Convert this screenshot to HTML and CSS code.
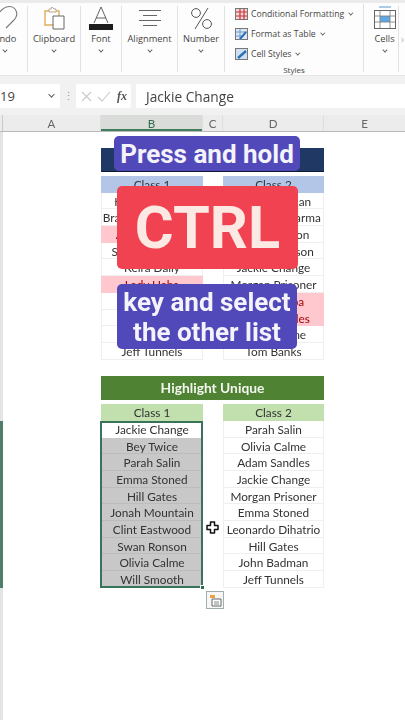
FILE: index.html
```html
<!DOCTYPE html>
<html lang="en">
<head>
<meta charset="utf-8">
<title>Highlight Unique</title>
<link rel="stylesheet" href="styles.css">
</head>
<body>
<div class="app">
  <header class="ribbon">
    <section class="group group-undo">
      <svg class="icon" width="46" height="24" viewBox="0 0 46 24"><path d="M18 6 C22 0 30 -1 33 3 C37 8 34 12 31 15 L24 22" fill="none" stroke="#777" stroke-width="1.1"/></svg>
      <span class="group-name">Undo</span><span class="chev"></span>
    </section>
    <section class="group group-clip">
      <svg class="icon" width="24" height="24" viewBox="0 0 24 24"><path d="M3 5 H17 V19 H3 Z" fill="#fff" stroke="#e3ac5c" stroke-width="1.4"/><path d="M7 5 V3 H9 L10 1 L12 3 H14 V6 H7 Z" fill="#fff" stroke="#b7a78c"/><path d="M11 10 H22 V23 H11 Z" fill="#fff" stroke="#666"/></svg>
      <span class="group-name">Clipboard</span><span class="chev"></span>
    </section>
    <section class="group group-font">
      <svg class="icon" width="26" height="24" viewBox="0 0 26 24"><path d="M6 17 L13 1 L20 17 M8 12 H18" fill="none" stroke="#555" stroke-width=".9"/><rect x="1" y="18" width="24" height="6" fill="#1c1c1c"/></svg>
      <span class="group-name">Font</span><span class="chev"></span>
    </section>
    <section class="group group-align">
      <svg class="icon" width="24" height="24" viewBox="0 0 24 24"><path d="M1 4.5 H23 M5 9.5 H19 M1 14.5 H23 M5 19.5 H19" stroke="#666" stroke-width="1"/></svg>
      <span class="group-name">Alignment</span><span class="chev"></span>
    </section>
    <section class="group group-num">
      <svg class="icon" width="24" height="24" viewBox="0 0 24 24"><circle cx="7" cy="7" r="4.4" fill="none" stroke="#555"/><circle cx="18" cy="18" r="4.4" fill="none" stroke="#555"/><path d="M19 2 L6 23" stroke="#555"/></svg>
      <span class="group-name">Number</span><span class="chev"></span>
    </section>
    <section class="group-styles">
      <div class="style-item">
        <svg width="13" height="13" viewBox="0 0 13 13"><rect x=".5" y=".5" width="12" height="11" fill="#f3d6d6" stroke="#777"/><path d="M1 4H12M1 8H12M5 1V12M9 1V12" stroke="#c8343c" stroke-width="1.2"/></svg>
        <span>Conditional Formatting</span><span class="chev small"></span>
      </div>
      <div class="style-item">
        <svg width="13" height="13" viewBox="0 0 13 13"><rect x=".5" y=".5" width="12" height="11" fill="#dbe7f5" stroke="#777"/><path d="M1 4H12M1 8H8M5 1V12" stroke="#6f9ccc"/><path d="M5 11 L11 4" stroke="#2f6fb3" stroke-width="2"/></svg>
        <span>Format as Table</span><span class="chev small"></span>
      </div>
      <div class="style-item">
        <svg width="13" height="13" viewBox="0 0 13 13"><rect x=".5" y=".5" width="12" height="11" fill="#cfe0f2" stroke="#777"/><path d="M3 10 L11 3" stroke="#2f6fb3" stroke-width="2.4"/></svg>
        <span>Cell Styles</span><span class="chev small"></span>
      </div>
      <div class="group-label">Styles</div>
    </section>
    <section class="group group-cells">
      <svg class="icon" width="24" height="24" viewBox="0 0 24 24"><path d="M6 1 H18" stroke="#5b9bd5"/><rect x="1.5" y="4.5" width="21" height="18" fill="#fff" stroke="#666"/><rect x="7" y="10" width="10" height="6" fill="#61a8e6"/><path d="M2 10H22M2 16H22M7 5V22M17 5V22" stroke="#777" stroke-width=".8"/></svg>
      <span class="group-name">Cells</span><span class="chev"></span>
    </section>
    <span class="more">›</span>
  </header>

  <div class="formula-bar">
    <div class="name-box"><span class="name-val">19</span><span class="chev dark"></span></div>
    <span class="grip">⋮</span>
    <div class="fx-box">
      <svg width="13" height="13" viewBox="0 0 13 13"><path d="M2 2 L11 11 M11 2 L2 11" stroke="#c9c9c9" stroke-width="1.1"/></svg>
      <svg width="14" height="13" viewBox="0 0 14 13"><path d="M1 7 L5 11 L13 2" fill="none" stroke="#c9c9c9" stroke-width="1.1"/></svg>
      <i class="fx">fx</i>
    </div>
    <div class="formula-input">Jackie Change</div>
  </div>

  <div class="col-heads">
    <span class="corner"></span>
    <span class="col col-a">A</span>
    <span class="col col-b">B</span>
    <span class="col col-c">C</span>
    <span class="col col-d">D</span>
    <span class="col col-e">E</span>
  </div>

  <main class="sheet">
    <div class="row-heads"><div class="row-sel"></div></div>
    <div class="tables">
      <section class="block block-top">
        <div class="title title-navy"></div>
        <div class="lists">
          <div class="list">
            <div class="cell head-blue">Class 1</div>
            <div class="cell">Hugh Jackman</div>
            <div class="cell">Bradley Cooperson</div>
            <div class="cell pink">Adam Sandles</div>
            <div class="cell">Samuel Jackson</div>
            <div class="cell">Keira Daily</div>
            <div class="cell pink">Lady Haha</div>
            <div class="cell">Emma Stoned</div>
            <div class="cell">Hill Gates</div>
            <div class="cell">Will Smooth</div>
            <div class="cell">Jeff Tunnels</div>
          </div>
          <div class="list">
            <div class="cell head-blue">Class 2</div>
            <div class="cell">Hugh Jackman</div>
            <div class="cell">Parminder Sharma</div>
            <div class="cell">Adam Lawton</div>
            <div class="cell">Samuel Jackson</div>
            <div class="cell">Jackie Change</div>
            <div class="cell">Morgan Prisoner</div>
            <div class="cell pink">Jessica Alba</div>
            <div class="cell pink">Adam Sandles</div>
            <div class="cell">Olivia Calme</div>
            <div class="cell">Tom Banks</div>
          </div>
        </div>
      </section>

      <section class="block block-bottom">
        <div class="title title-green">Highlight Unique</div>
        <div class="lists">
          <div class="list list-selected">
            <div class="cell head-green">Class 1</div>
            <div class="cell active">Jackie Change</div>
            <div class="cell grey">Bey Twice</div>
            <div class="cell grey">Parah Salin</div>
            <div class="cell grey">Emma Stoned</div>
            <div class="cell grey">Hill Gates</div>
            <div class="cell grey">Jonah Mountain</div>
            <div class="cell grey">Clint Eastwood</div>
            <div class="cell grey">Swan Ronson</div>
            <div class="cell grey">Olivia Calme</div>
            <div class="cell grey">Will Smooth</div>
            <div class="selection"><span class="handle"></span></div>
          </div>
          <div class="list">
            <div class="cell head-green">Class 2</div>
            <div class="cell">Parah Salin</div>
            <div class="cell">Olivia Calme</div>
            <div class="cell">Adam Sandles</div>
            <div class="cell">Jackie Change</div>
            <div class="cell">Morgan Prisoner</div>
            <div class="cell">Emma Stoned</div>
            <div class="cell">Leonardo Dihatrio</div>
            <div class="cell">Hill Gates</div>
            <div class="cell">John Badman</div>
            <div class="cell">Jeff Tunnels</div>
          </div>
          <svg class="cursor" width="13" height="13" viewBox="0 0 13 13"><path d="M4.5 1 H8.5 V4.5 H12 V8.5 H8.5 V12 H4.5 V8.5 H1 V4.5 H4.5 Z" fill="#fff" stroke="#111" stroke-width="1.5" stroke-linejoin="round"/></svg>
          <div class="paste-options">
            <svg width="13" height="13" viewBox="0 0 13 13"><path d="M1 1 H6 V4 H1 Z" fill="#e8a33d"/><path d="M3 5 H12 V12 H3 Z" fill="#fff" stroke="#666"/><path d="M5 8H10M5 10H10" stroke="#888"/></svg>
          </div>
        </div>
      </section>
    </div>
  </main>

  <div class="banner banner-press">Press and hold</div>
  <div class="banner banner-ctrl">CTRL</div>
  <div class="banner banner-key">key and select<br>the other list</div>
</div>
</body>
</html>
```
FILE: styles.css
```css
* { box-sizing: border-box; }
html, body { margin: 0; padding: 0; }
body { width: 405px; height: 720px; overflow: hidden; background: #fff; font-family: "Open Sans", "Noto Sans", sans-serif; color: #333; }
.app { position: relative; width: 405px; height: 720px; overflow: hidden; display: flex; flex-direction: column; filter: blur(.3px); }

/* Ribbon */
.ribbon { height: 76px; flex: none; display: flex; background: #fdfdfd; border-top: 3px solid #ebebeb; border-bottom: 1px solid #e6e6e6; overflow: hidden; padding-top: 3px; }
.group { display: flex; flex-direction: column; align-items: center; height: 66px; border-right: 1px solid #e2e2e2; flex: none; }
.group .icon { height: 24px; flex: none; }
.group-name { font-size: 9.3px; line-height: 12px; margin-top: 3px; color: #444; white-space: nowrap; }
.chev { display: block; width: 4px; height: 4px; border-right: 1px solid #555; border-bottom: 1px solid #555; transform: rotate(45deg) scale(.9); margin-top: 3px; flex: none; }
.chev.small { margin: 0 0 2px 3px; width: 3.5px; height: 3.5px; }
.group-undo { width: 46px; margin-left: -18px; }
.group-clip { width: 53px; }
.group-font { width: 41px; }
.group-align { width: 56px; }
.group-num { width: 47px; }
.group-cells { width: 35px; padding-left: 7px; }
.group-styles { width: 139px; flex: none; border-right: 1px solid #e2e2e2; height: 68px; margin-top: -2px; padding: 0 0 0 10px; display: flex; flex-direction: column; }
.style-item { display: flex; align-items: center; gap: 2px; height: 20px; flex: none; font-size: 8.7px; color: #444; white-space: nowrap; }
.style-item svg { flex: none; margin-right: 1px; }
.group-label { font-size: 8px; line-height: 10px; text-align: center; color: #444; padding-right: 10px; margin-top: 1px; flex: none; }
.more { font-size: 10px; color: #bbb; padding: 26px 0 0 2px; }

/* Formula bar */
.formula-bar { height: 36px; flex: none; display: flex; align-items: flex-start; background: #f1f1f1; padding-top: 8px; }
.name-box { width: 60px; height: 24px; flex: none; background: #fff; border-radius: 2px; display: flex; align-items: center; justify-content: space-between; padding-right: 6px; font-size: 13px; overflow: hidden; }
.name-val { color: #444; }
.chev.dark { margin: 0 0 3px; width: 5px; height: 5px; }
.grip { width: 16px; height: 24px; flex: none; text-align: center; font-size: 11px; line-height: 24px; color: #999; }
.fx-box { width: 55px; height: 24px; flex: none; background: #fff; border-radius: 2px; display: flex; align-items: center; gap: 4px; padding-left: 4px; }
.fx { font-family: "Liberation Serif", serif; font-size: 12px; font-weight: 700; color: #555; margin-left: 2px; }
.formula-input { margin-left: 5px; flex: 1; height: 24px; background: #fff; border-radius: 2px 0 0 2px; font-size: 13.7px; line-height: 25px; padding-left: 10px; color: #444; white-space: nowrap; }

/* Column heads */
.col-heads { height: 20px; flex: none; display: flex; background: #ececec; border-top: 3px solid #f1f1f1; border-bottom: 1px solid #b9b9b9; }
.col-heads .col { font-family: "Lato", sans-serif; font-size: 11.5px; line-height: 17px; text-align: center; color: #666; border-right: 1px solid #dedede; flex: none; }
.corner { width: 3px; flex: none; border-right: 1px solid #c9c9c9; }
.col-a { width: 98px; }
.col-b { width: 102px; background: #d9dcd9; box-shadow: inset 0 -2px 0 #3f7d5d; color: #2f6b4f !important; }
.col-c { width: 20px; }
.col-d { width: 101px; }
.col-e { width: 81px; border-right: 0 !important; }

/* Sheet */
.sheet { flex: 1; display: flex; min-height: 0; }
.row-heads { width: 3px; flex: none; background: #e4e4e4; padding-top: 289px; }
.row-sel { height: 167px; background: #4f7f68; }
.tables { margin-left: 98px; width: 223px; padding-top: 16px; display: flex; flex-direction: column; gap: 16.6px; }
.block { display: flex; flex-direction: column; gap: 4.5px; }
.title { height: 23.5px; flex: none; font-family: "Lato", sans-serif; font-weight: 700; font-size: 13.8px; line-height: 24px; text-align: center; color: #f3f6ef; }
.title-navy { background: #1f3864; border-bottom: 1px solid #101b33; }
.title-green { background: #4f8233; }
.lists { position: relative; display: flex; justify-content: space-between; }
.list { position: relative; width: 102px; }
.list + .list { width: 101px; }
.cell { height: 16.7px; font-family: "Lato", sans-serif; font-size: 11.8px; line-height: 18px; text-align: center; color: #333; white-space: nowrap; border: 1px solid #efefef; border-top: 0; }
.head-blue { background: #b4c6e7; border: 0; }
.head-green { background: #c1e0ae; border: 0; }
.pink { background: #ffc7ce; color: #9c0006; border-color: #ffc7ce; }
.grey { background: #c8c8c8; border-color: #bcbcbc; border-left: 0; border-right: 0; }
.active { border: 0; }
.selection { position: absolute; left: -1px; right: 0; top: 16.7px; bottom: -.5px; border: 2px solid #38735a; pointer-events: none; }
.handle { position: absolute; right: -4px; bottom: -4px; width: 5px; height: 5px; background: #2e6b50; border: 1px solid #fff; }
.cursor { position: absolute; left: 105px; top: 117px; }
.paste-options { position: absolute; left: 105px; top: 187px; width: 18px; height: 18px; background: #f7f7f7; border: 1px solid #9fb0a8; display: flex; align-items: center; justify-content: center; }

/* Banners */
.banner { position: absolute; display: flex; align-items: center; justify-content: center; text-align: center; font-family: "Roboto", sans-serif; font-weight: 700; border-radius: 5px; color: #f4f3fb; background: #5149b9; }
.banner-press { left: 114px; top: 136px; width: 186px; height: 35px; font-size: 26px; }
.banner-ctrl { left: 117px; top: 186px; width: 181px; height: 83px; font-size: 59.5px; background: #f04250; color: #fde9e4; }
.banner-key { left: 117px; top: 284px; width: 180px; height: 65px; font-size: 26px; line-height: 30px; }
```
